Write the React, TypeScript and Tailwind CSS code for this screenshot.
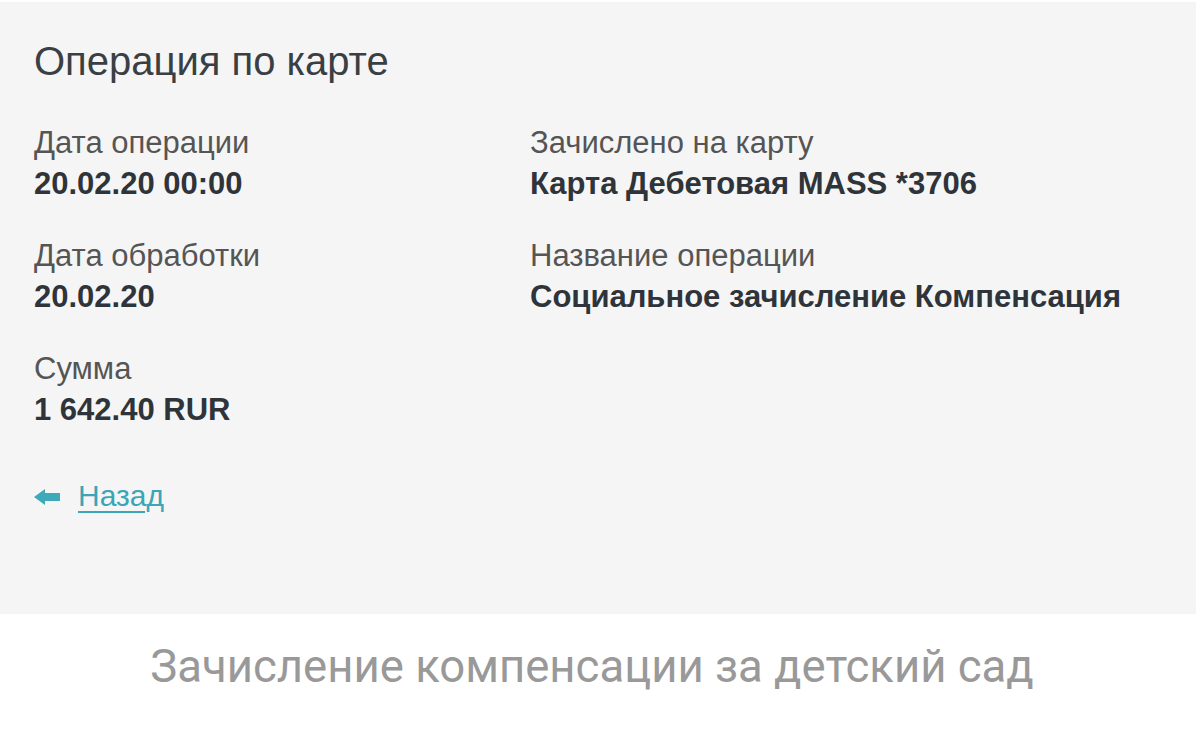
const arial = { fontFamily: '"Liberation Sans", Arial, sans-serif' };

function Field({ label, value }: { label: string; value: string }) {
  return (
    <div>
      <div className="text-[31px] leading-[41px] text-[#555]">{label}</div>
      <div className="text-[31px] leading-[41px] font-bold text-[#2f343a]">{value}</div>
    </div>
  );
}

export default function App() {
  return (
    <div className="w-[1200px] h-[743px] bg-white overflow-hidden" style={arial}>
      <div className="mt-[2px] w-[1196px] h-[612px] bg-[#f5f5f5] pl-[34px] pt-[35px]">
        <h1 className="text-[40px] leading-[48px] text-[#3a3f44] mb-[37px]">Операция по карте</h1>
        <div className="grid grid-cols-[496px_1fr]">
          <div className="flex flex-col gap-[31px]">
            <Field label="Дата операции" value="20.02.20 00:00" />
            <Field label="Дата обработки" value="20.02.20" />
            <Field label="Сумма" value="1 642.40 RUR" />
          </div>
          <div className="flex flex-col gap-[31px]">
            <Field label="Зачислено на карту" value="Карта Дебетовая MASS *3706" />
            <Field label="Название операции" value="Социальное зачисление Компенсация" />
          </div>
        </div>
        <a href="#" className="flex items-center gap-[18px] mt-[46px] text-[30px] leading-[40px] text-[#3aa6b7] underline underline-offset-[5px] decoration-[2px]">
          <svg width="26" height="16" viewBox="0 0 26 16" className="shrink-0 mt-[2px]">
            <path d="M0 8 L11 0 V4 H26 V12 H11 V16 Z" fill="#3ea9b9" />
          </svg>
          <span>Назад</span>
        </a>
      </div>
      <div
        className="text-center text-[45.5px] leading-[53px] text-[#999] mt-[26px] pr-[16px]"
        style={{ fontFamily: 'Roboto, "Noto Sans", sans-serif' }}
      >
        Зачисление компенсации за детский сад
      </div>
    </div>
  );
}
